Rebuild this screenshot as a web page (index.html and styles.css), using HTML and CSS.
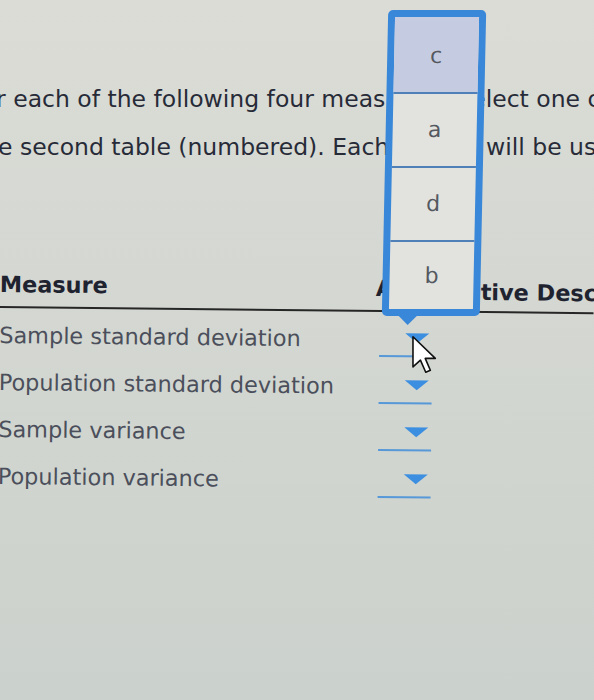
FILE: index.html
```html
<!DOCTYPE html>
<html lang="en">
<head>
    <meta charset="UTF-8">
    <meta name="viewport" content="width=device-width, initial-scale=1.0">
    <title>Measures of Variability</title>

    <link rel="stylesheet" href="styles.css">
</head>
<body>
    <div class="page">
        <!-- instructions -->
        <div class="intro">
            <p class="intro-line">
                <span class="intro-left first">For each of the following four measures</span>
                <span class="intro-right first">select one of the descriptions</span>
            </p>
            <p class="intro-line">
                <span class="intro-left second">the second table (numbered). Each</span>
                <span class="intro-right">will be used once.</span>
            </p>
        </div>

        <!-- measures table -->
        <div class="measure-table">
            <div class="row head">
                <div class="cell">Measure</div>
                <div class="cell answer-head">Answer</div>
                <div class="cell desc-head">tive Description</div>
            </div>
            <div class="row">
                <div class="cell">Sample standard deviation</div>
                <div class="cell"><span class="select"><span class="arrow"></span></span></div>
                <div class="cell"></div>
            </div>
            <div class="row">
                <div class="cell">Population standard deviation</div>
                <div class="cell"><span class="select"><span class="arrow"></span></span></div>
                <div class="cell"></div>
            </div>
            <div class="row">
                <div class="cell">Sample variance</div>
                <div class="cell"><span class="select"><span class="arrow"></span></span></div>
                <div class="cell"></div>
            </div>
            <div class="row">
                <div class="cell">Population variance</div>
                <div class="cell"><span class="select"><span class="arrow"></span></span></div>
                <div class="cell"></div>
            </div>
        </div>

        <!-- open dropdown list -->
        <ul class="dropdown">
            <li class="active">c</li>
            <li>a</li>
            <li>d</li>
            <li>b</li>
        </ul>

        <!-- mouse pointer -->
        <svg class="pointer" width="27" height="39" viewBox="0 0 15 22">
            <path d="M1 1 L1 18 L5.2 14.2 L8.2 21 L10.8 19.9 L7.9 13.2 L13.6 13.2 Z" fill="#fff" stroke="#111" stroke-width="0.9" stroke-linejoin="round"/>
        </svg>
    </div>
</body>
</html>
```

FILE: styles.css
```css
/* page background and font */
html, body {
    margin: 0;
    padding: 0;
}

body {
    font-family: "DejaVu Sans", Verdana, sans-serif;
    color: #272b38;
    background: linear-gradient(#dbdcd6, #cbd1cc);
    min-height: 100vh;
}

.page {
    position: relative;
    height: 700px;
    overflow: hidden;
    padding-top: 75px;
    box-sizing: border-box;
}

/* instruction lines */
.intro-line {
    display: flex;
    margin: 0;
    font-size: 23.5px;
    line-height: 48px;
    white-space: nowrap;
}

.intro-left {
    width: 386px;
    overflow: hidden;
    flex-shrink: 0;
}

.intro-left.first {
    text-indent: -31px;
}

.intro-left.second {
    text-indent: -26px;
}

.intro-right {
    margin-left: 100px;
}

.intro-right.first {
    text-indent: -27px;
}

/* measures table, the screen is seen a little tilted */
.measure-table {
    margin-top: 93px;
    transform: rotate(0.6deg);
    transform-origin: 0 0;
}

.row {
    display: grid;
    grid-template-columns: 378px 103px 1fr;
    font-size: 22.4px;
    line-height: 47px;
    white-space: nowrap;
    color: #4b4f5b;
}

.row.head {
    align-items: end;
    font-weight: bold;
    line-height: 40px;
    padding-bottom: 2px;
    border-bottom: 2px solid #262626;
    color: #1f2330;
    margin-bottom: 4px;
}

.answer-head {
    text-indent: -2px;
}

.desc-head {
    line-height: 34px;
}

/* closed select boxes */
.select {
    display: flex;
    justify-content: flex-end;
    box-sizing: border-box;
    width: 53px;
    height: 24px;
    margin: 17px 0 0 2px;
    padding-right: 3px;
    border-bottom: 2px solid #5698d8;
}

.arrow {
    width: 0;
    height: 0;
    border-left: 12px solid transparent;
    border-right: 12px solid transparent;
    border-top: 10px solid #3c8fe0;
}

/* dropdown list lying over the page */
.dropdown {
    position: absolute;
    left: 385px;
    top: 10px;
    width: 84px;
    margin: 0;
    padding: 0;
    list-style: none;
    border: 7px solid #3987d8;
    border-radius: 5px;
    background-color: #e2e3df;
    font-size: 22px;
    color: #545860;
    text-align: center;
    transform: skewX(-1.2deg);
}

.dropdown li {
    height: 72px;
    line-height: 72px;
    border-top: 2px solid #4f80b8;
}

.dropdown li:first-child {
    height: 75px;
    line-height: 78px;
    border-top: none;
}

.dropdown li:last-child {
    height: 67px;
    line-height: 68px;
}

.dropdown li.active {
    background-color: #c5cce1;
}

/* small tail under the list */
.dropdown::after {
    content: "";
    position: absolute;
    left: 7px;
    top: 100%;
    margin-top: 4px;
    border-left: 12px solid transparent;
    border-right: 12px solid transparent;
    border-top: 12px solid #3987d8;
}

.pointer {
    position: absolute;
    left: 411px;
    top: 335px;
}
```
